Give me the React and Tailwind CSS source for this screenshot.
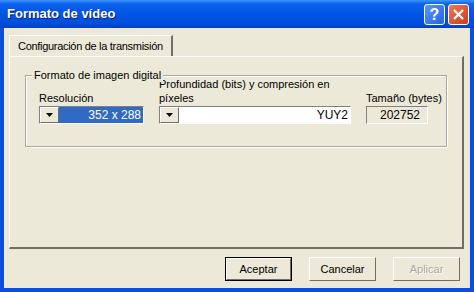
const font = { fontFamily: '"Liberation Sans", Arial, sans-serif' };

const Dropdown = ({ value, selected, className }) => (
  <div className={`flex h-[18px] border-t border-l border-[#808080] border-r border-b border-r-white border-b-white ${className}`}>
    <div className="flex w-[19px] items-center justify-center border-t border-l border-white border-r border-b border-r-[#716f64] border-b-[#716f64] bg-[#ece9d8]">
      <svg width="7" height="4" viewBox="0 0 7 4">
        <path d="M0 0h7L3.5 4z" fill="#000" />
      </svg>
    </div>
    <div
      className={`flex flex-1 items-center justify-end pr-[2px] text-[12px] ${
        selected ? 'bg-[#316ac5] text-white' : 'bg-white text-black'
      }`}
    >
      {value}
    </div>
  </div>
);

const Button = ({ children, isDefault, disabled }) => (
  <div
    className={`flex h-[24px] w-[67px] items-center justify-center ${
      isDefault ? 'border border-black' : ''
    }`}
  >
    <div className="flex h-full w-full items-center justify-center border-t border-l border-white border-r border-b border-r-[#716f64] border-b-[#716f64] bg-[#ece9d8]">
      <span
        className={`text-[11px] ${
          disabled ? 'text-[#aca899] [text-shadow:1px_1px_0_#fff]' : 'text-black'
        }`}
      >
        {children}
      </span>
    </div>
  </div>
);

export default function App() {
  return (
    <div
      className="flex h-[292px] w-[474px] flex-col bg-[#0a4fe0]"
      style={font}
    >
      {/* Title bar */}
      <div className="flex h-[28px] items-center justify-between bg-[linear-gradient(to_bottom,#3d95ff_0%,#0a61ea_14%,#0055e5_50%,#004ed9_85%,#0040c4_100%)] pl-[7px] pr-[5px]">
        <span className="text-[13px] font-bold text-white [text-shadow:1px_1px_0_#0a1e6e]">
          Formato de vídeo
        </span>
        <div className="flex gap-[3px] pt-[1px]">
          <div className="flex h-[21px] w-[21px] items-center justify-center rounded-[3px] border border-white bg-[linear-gradient(135deg,#5d95f7,#2462e3)]">
            <span className="text-[16px] font-bold leading-none text-white">?</span>
          </div>
          <div className="flex h-[21px] w-[21px] items-center justify-center rounded-[3px] border border-white bg-[linear-gradient(135deg,#ec7a58,#cf3b17)]">
            <svg width="11" height="11" viewBox="0 0 11 11">
              <path d="M1 1l9 9M10 1l-9 9" stroke="#fff" strokeWidth="2.2" />
            </svg>
          </div>
        </div>
      </div>

      {/* Body */}
      <div className="mx-[4px] mb-[4px] flex flex-1 flex-col bg-[#ece9d8] px-[5px] pt-[7px]">
        {/* Tab header */}
        <div className="flex">
          <div className="-mb-px flex h-[22px] items-center border-t border-l border-white border-r-2 border-r-[#716f64] bg-[#ece9d8] px-[8px] text-[11px] tracking-[-0.3px] text-black">
            Configuración de la transmisión
          </div>
        </div>

        {/* Tab panel */}
        <div className="flex h-[193px] w-[455px] flex-col border-t border-l border-white border-r-2 border-b-2 border-r-[#716f64] border-b-[#716f64] pl-[15px] pt-[18px]">
          <div className="relative flex h-[72px] w-[422px] items-end gap-[15px] border border-[#aca899] pb-[22px] pl-[13px] shadow-[inset_1px_1px_0_#fff,1px_1px_0_#fff]">
            <span className="absolute -top-[8px] left-[6px] bg-[#ece9d8] px-[2px] text-[11px] leading-[14px] text-black">
              Formato de imagen digital
            </span>

            <div className="flex w-[105px] flex-col">
              <span className="text-[11px] leading-[14px] text-black">Resolución</span>
              <Dropdown value="352 x 288" selected className="mt-[1px]" />
            </div>

            <div className="flex w-[192px] flex-col">
              <span className="text-[11px] leading-[14px] text-black">
                Profundidad (bits) y compresión en
                <br />
                píxeles
              </span>
              <Dropdown value="YUY2" className="mt-[1px]" />
            </div>

            <div className="flex w-[62px] flex-col">
              <span className="whitespace-nowrap text-[11px] leading-[14px] text-black">Tamaño (bytes)</span>
              <div className="mt-[1px] flex h-[18px] items-center justify-end border-t border-l border-[#808080] border-r border-b border-r-white border-b-white pr-[7px] text-[12px] text-black">
                202752
              </div>
            </div>
          </div>
        </div>

        {/* Buttons */}
        <div className="mt-[8px] flex justify-end gap-[17px] pr-[5px]">
          <Button isDefault>Aceptar</Button>
          <Button>Cancelar</Button>
          <Button disabled>Aplicar</Button>
        </div>
      </div>
    </div>
  );
}
